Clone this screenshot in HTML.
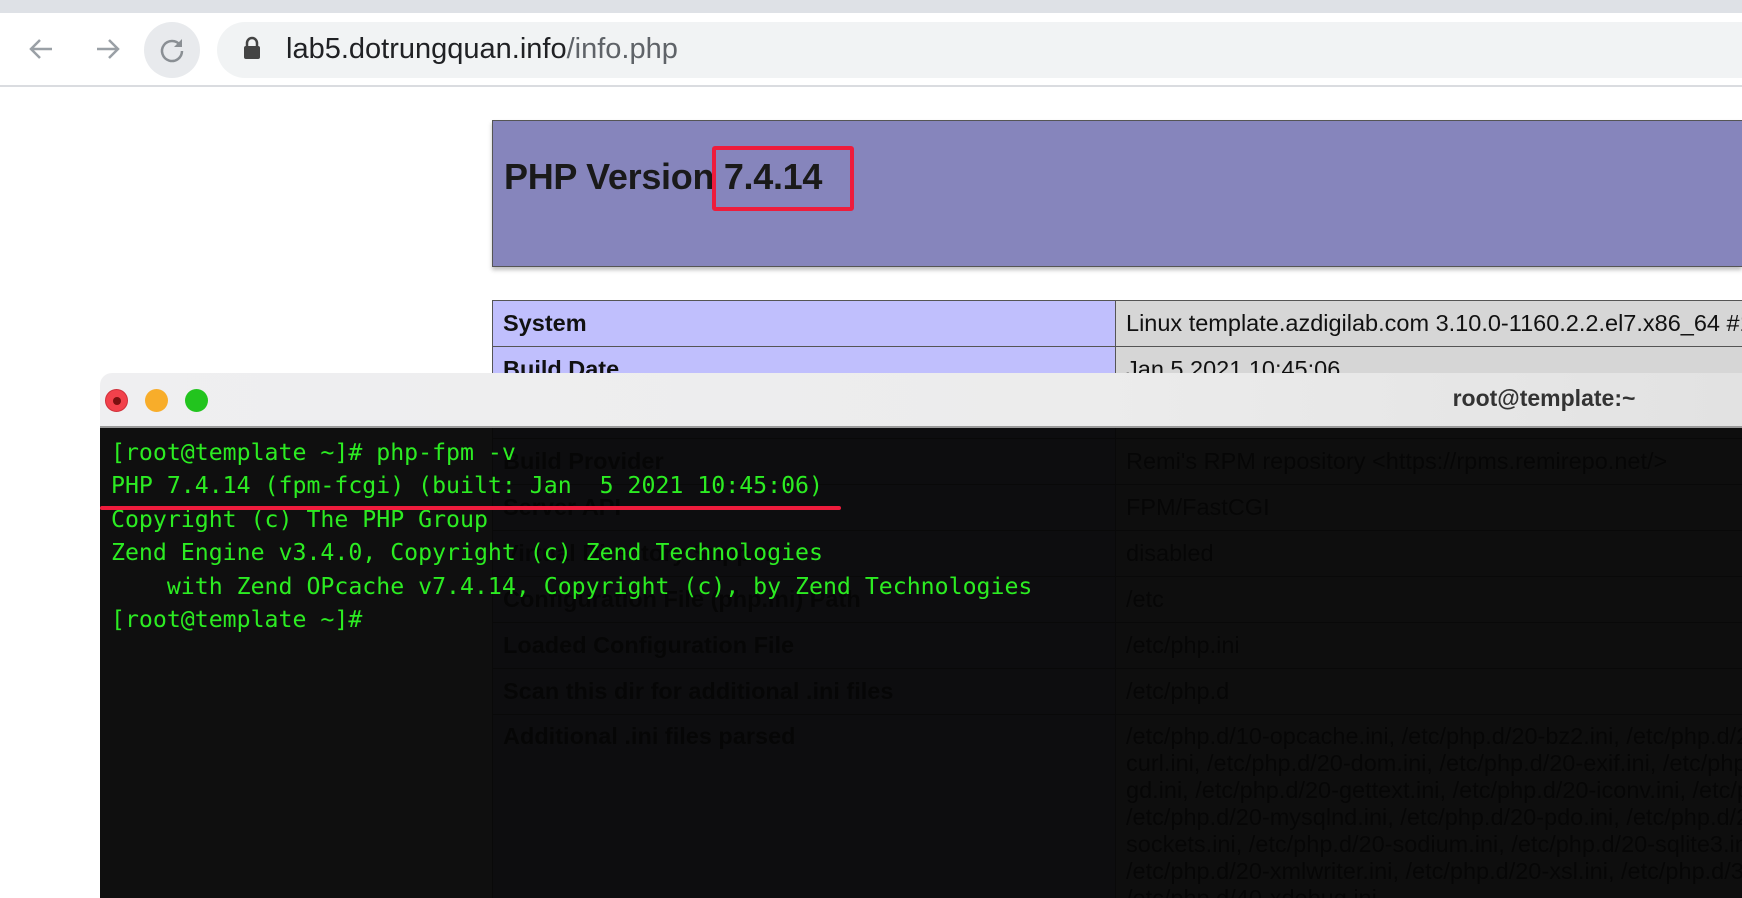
<!DOCTYPE html>
<html><head><meta charset="utf-8">
<style>
*{margin:0;padding:0;box-sizing:border-box}
html,body{width:1742px;height:898px;overflow:hidden}
body{background:#fff;position:relative;font-family:"Liberation Sans",Arial,sans-serif}
.tabs{position:absolute;left:0;top:0;width:1742px;height:13px;background:#dee1e6}
.toolbar{position:absolute;left:0;top:13px;width:1742px;height:74px;background:#fff;border-bottom:2px solid #dadce0}
.addr{position:absolute;left:217px;top:22px;width:1525px;height:56px;border-top-left-radius:28px;border-bottom-left-radius:28px;background:#f1f3f4}
.url{position:absolute;left:286px;top:32px;font-size:29px;color:#202124;line-height:34px;white-space:nowrap}
.url span{color:#5f6368}
.reload{position:absolute;left:144px;top:22px;width:56px;height:56px;border-radius:50%;background:#e8eaed}
.hdr{position:absolute;left:492px;top:120px;width:1250px;height:147px;background:#8685bc;border:1.5px solid #555;border-right:none;box-shadow:0 3px 4px rgba(0,0,0,.25)}
.hdr h1{position:absolute;left:11px;top:35px;font-size:36px;font-weight:bold;color:#1a1a1a;letter-spacing:-0.3px;white-space:nowrap}
.redbox{position:absolute;left:712px;top:146px;width:142px;height:65px;border:4px solid #ee1c3c;border-radius:3px}
.tw{position:absolute;left:492px;top:300px;width:1250px;height:598px;overflow:hidden}
table{border-collapse:collapse;width:1400px;table-layout:fixed}
td{border:1.5px solid #555;height:46px;font-size:23.5px;padding:0 10px;vertical-align:middle;color:#111;white-space:nowrap;overflow:hidden}
td.l{background:#c0bffd;font-weight:bold}
td.v{background:#d6d6d6}
td.multi{vertical-align:top;padding-top:8px;line-height:27px}
.term{position:absolute;left:100px;top:373px;width:1642px;height:525px;border-top-left-radius:12px;overflow:hidden}
.tbar{height:55px;background:linear-gradient(90deg,#efeff1,#ececec 60%,#e2e2e2);border-bottom:2px solid #9a9a9a;position:relative}
.dot{position:absolute;top:16px;width:23px;height:23px;border-radius:50%}
.title{position:absolute;left:1334px;width:220px;top:12px;text-align:center;font-size:23px;font-weight:bold;color:#333}
.tbody{background:rgba(6,6,6,0.965);height:470px;padding:8px 0 0 11px;font-family:"DejaVu Sans Mono","Liberation Mono",monospace;font-size:23.2px;color:#2cec22;line-height:33.4px;white-space:pre;position:relative}
.uline{position:absolute;left:0;top:78px;width:741px;height:4px;background:#ee1c3c;border-radius:2px}
</style></head><body>
<div class="tabs"></div>
<div class="toolbar"></div>
<svg style="position:absolute;left:26px;top:34px" width="30" height="30" viewBox="0 0 30 30"><path d="M26 15H5M14 6l-9 9 9 9" stroke="#9aa0a6" stroke-width="2.5" fill="none"/></svg>
<svg style="position:absolute;left:93px;top:34px" width="30" height="30" viewBox="0 0 30 30"><path d="M4 15h21M16 6l9 9-9 9" stroke="#9aa0a6" stroke-width="2.5" fill="none"/></svg>
<div class="reload"></div>
<svg style="position:absolute;left:158px;top:36px" width="28" height="28" viewBox="0 0 28 28"><path d="M22 9A10 10 0 1 0 24 15" stroke="#8a8f94" stroke-width="2.5" fill="none"/><path d="M24 3v8h-8z" fill="#8a8f94"/></svg>
<div class="addr"></div>
<svg style="position:absolute;left:243px;top:36px" width="18" height="24" viewBox="0 0 18 24"><path d="M4 11V7a5 5 0 0 1 10 0v4" stroke="#444" stroke-width="2.5" fill="none"/><rect x="1" y="10" width="16" height="13" rx="2" fill="#444"/></svg>
<div class="url">lab5.dotrungquan.info<span>/info.php</span></div>

<div class="hdr"><h1>PHP Version 7.4.14</h1></div>
<div class="redbox"></div>

<div class="tw">
<table>
<colgroup><col style="width:623px"><col></colgroup>
<tr><td class="l">System</td><td class="v">Linux template.azdigilab.com 3.10.0-1160.2.2.el7.x86_64 #1 SMP Tue Oct 20 16:53:08 UTC 2020 x86_64</td></tr>
<tr><td class="l">Build Date</td><td class="v">Jan 5 2021 10:45:06</td></tr>
<tr><td class="l">Build System</td><td class="v">Red Hat Enterprise Linux Server release 7.9 (Maipo)</td></tr>
<tr><td class="l">Build Provider</td><td class="v">Remi's RPM repository &lt;https://rpms.remirepo.net/&gt;</td></tr>
<tr><td class="l">Server API</td><td class="v">FPM/FastCGI</td></tr>
<tr><td class="l">Virtual Directory Support</td><td class="v">disabled</td></tr>
<tr><td class="l">Configuration File (php.ini) Path</td><td class="v">/etc</td></tr>
<tr><td class="l">Loaded Configuration File</td><td class="v">/etc/php.ini</td></tr>
<tr><td class="l">Scan this dir for additional .ini files</td><td class="v">/etc/php.d</td></tr>
<tr><td class="l multi">Additional .ini files parsed</td><td class="v multi" style="height:300px">/etc/php.d/10-opcache.ini, /etc/php.d/20-bz2.ini, /etc/php.d/20-calendar.ini<br>curl.ini, /etc/php.d/20-dom.ini, /etc/php.d/20-exif.ini, /etc/php.d/20-fileinfo.ini<br>gd.ini, /etc/php.d/20-gettext.ini, /etc/php.d/20-iconv.ini, /etc/php.d/20-json.ini<br>/etc/php.d/20-mysqlnd.ini, /etc/php.d/20-pdo.ini, /etc/php.d/20-phar.ini<br>sockets.ini, /etc/php.d/20-sodium.ini, /etc/php.d/20-sqlite3.ini, /etc/php.d/20-tokenizer.ini<br>/etc/php.d/20-xmlwriter.ini, /etc/php.d/20-xsl.ini, /etc/php.d/30-mysqli.ini<br>/etc/php.d/40-xdebug.ini</td></tr>
</table>
</div>

<div class="term">
<div class="tbar">
<div class="dot" style="left:5px;background:#f2414b;border:1px solid #d0303a"><div style="position:absolute;left:7px;top:7px;width:8px;height:8px;border-radius:50%;background:#7a1010"></div></div>
<div class="dot" style="left:45px;background:#f8ad2a"></div>
<div class="dot" style="left:85px;background:#22c41e"></div>
<div class="title">root@template:~</div>
</div>
<div class="tbody"><div>[root@template ~]# php-fpm -v</div><div>PHP 7.4.14 (fpm-fcgi) (built: Jan  5 2021 10:45:06)</div><div>Copyright (c) The PHP Group</div><div>Zend Engine v3.4.0, Copyright (c) Zend Technologies</div><div>    with Zend OPcache v7.4.14, Copyright (c), by Zend Technologies</div><div>[root@template ~]#</div><div class="uline"></div></div>
</div>
</body></html>
